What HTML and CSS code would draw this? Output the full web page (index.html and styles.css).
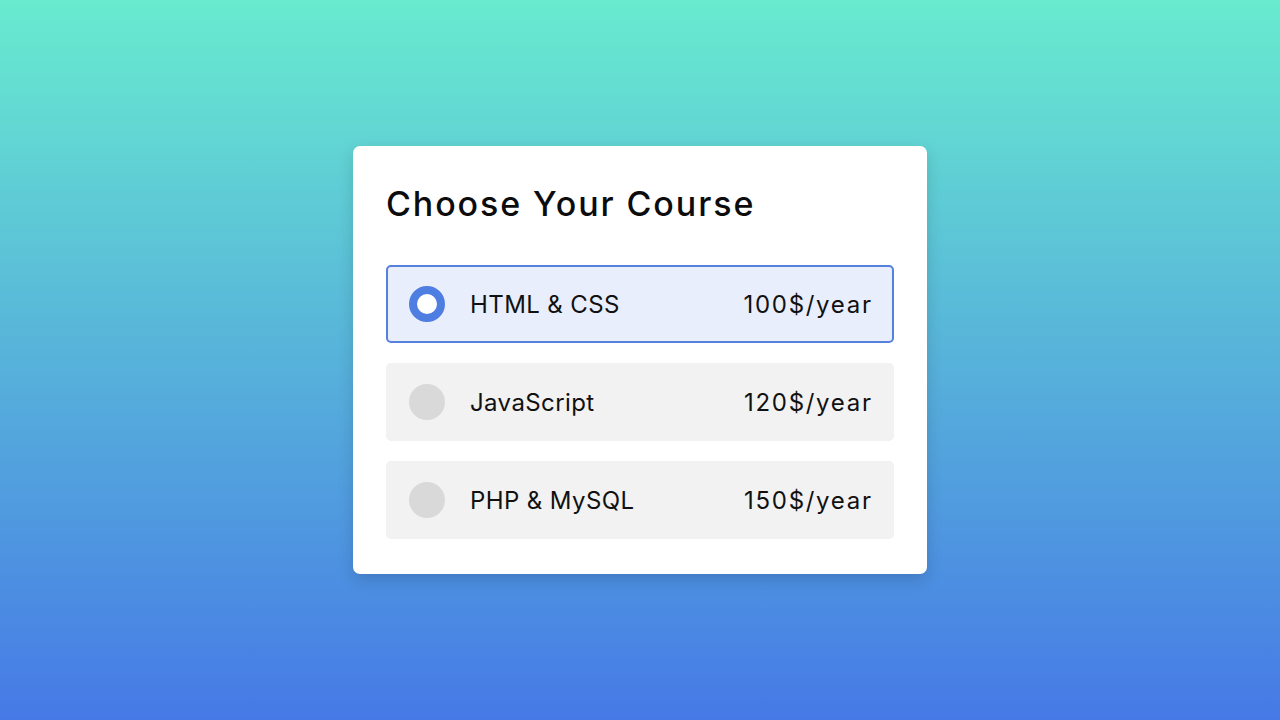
FILE: index.html
```html
<!DOCTYPE html>
<html>
<head>
<meta charset="utf-8">
<link rel="stylesheet" href="styles.css">
</head>
<body>
<div class="card">
  <h1 class="title">Choose Your Course</h1>
  <div class="options">
    <label class="option selected">
      <span class="radio"></span>
      <span class="name">HTML &amp; CSS</span>
      <span class="price">100$/year</span>
    </label>
    <label class="option">
      <span class="radio"></span>
      <span class="name">JavaScript</span>
      <span class="price">120$/year</span>
    </label>
    <label class="option">
      <span class="radio"></span>
      <span class="name">PHP &amp; MySQL</span>
      <span class="price">150$/year</span>
    </label>
  </div>
</div>
</body>
</html>
```
FILE: styles.css
```css
* { box-sizing: border-box; }
html, body { margin: 0; height: 100%; }
body {
  width: 1280px;
  height: 720px;
  background: linear-gradient(to bottom, #68ebcf 0%, #4679e6 100%);
  font-family: Inter, "Open Sans", sans-serif;
  display: flex;
  align-items: center;
  justify-content: center;
}
.card {
  width: 574px;
  height: 428px;
  background: #fff;
  border-radius: 7px;
  padding: 33px;
  box-shadow: 0 6px 16px rgba(0,0,0,0.15);
}
.title {
  margin: 0 0 37px 0;
  font-size: 34px;
  line-height: 49px;
  font-weight: 500;
  letter-spacing: 1.9px;
  color: #0c0c0c;
}
.options {
  display: flex;
  flex-direction: column;
  gap: 20px;
}
.option {
  height: 78px;
  border: 2px solid transparent;
  border-radius: 5px;
  background: #f2f2f2;
  display: flex;
  align-items: center;
  padding: 0 21px;
  font-size: 24px;
  color: #111;
}
.option.selected {
  background: #e8eefb;
  border-color: #5681dd;
}
.radio {
  width: 36px;
  height: 36px;
  border-radius: 50%;
  background: #d9d9d9;
  flex: none;
  margin-right: 25px;
}
.selected .radio {
  background: #fff;
  border: 8px solid #4f7ee3;
}
.name { flex: 1; letter-spacing: 0.4px; }
.price { flex: none; letter-spacing: 1.7px; margin-right: -1.7px; }
```
